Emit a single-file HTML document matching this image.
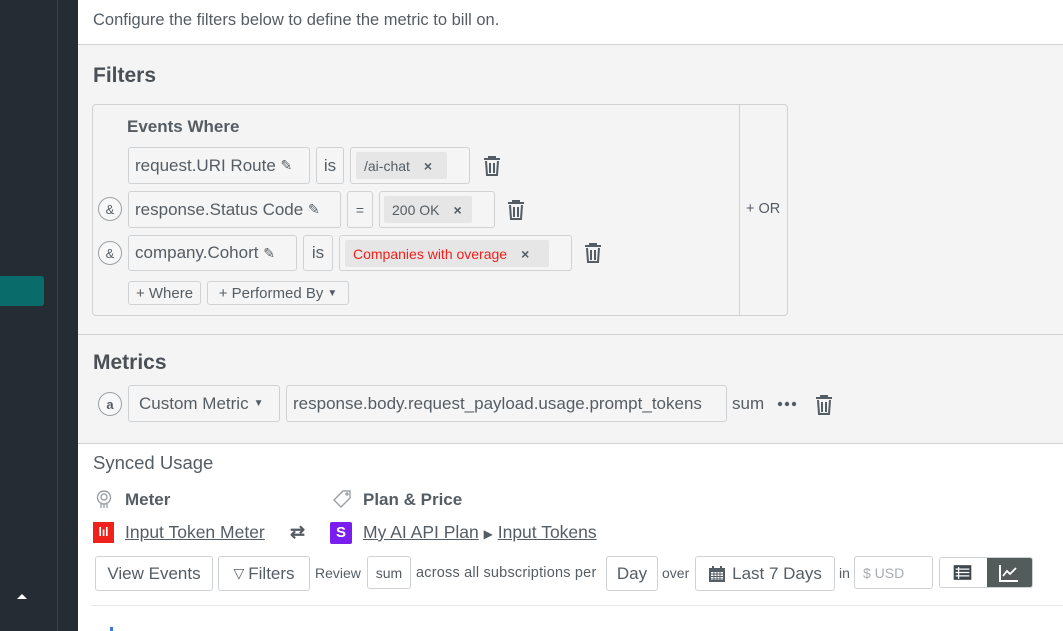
<!DOCTYPE html>
<html><head><meta charset="utf-8"><style>
*{box-sizing:border-box;margin:0;padding:0}
body{width:1063px;height:631px;overflow:hidden;position:relative;background:#fff;font-family:"Liberation Sans",sans-serif;color:#555d64}
.a{position:absolute;white-space:nowrap}
.b{position:absolute;border:1px solid #cfd2d4;border-radius:3px;background:#f5f5f5;white-space:nowrap;display:flex;align-items:center;justify-content:center;font-size:17px;color:#555d64}
.l{justify-content:flex-start;padding-left:6px}
.w{background:#fff}
.chip{position:absolute;background:#e6e6e6;border-radius:2px;display:flex;align-items:center;font-size:14px;padding-left:8px;white-space:nowrap}
.c{position:absolute;width:24px;height:24px;border:1px solid #9aa0a4;border-radius:50%;background:#f8f8f8;font-size:13px;display:flex;align-items:center;justify-content:center}
.t{position:absolute}
u{text-decoration:underline}
</style></head><body>
<div class="a" style="left:0;top:0;width:78px;height:631px;background:#252c33"></div>
<div class="a" style="left:57px;top:0;width:1px;height:631px;background:#3a424a"></div>
<div class="a" style="left:0;top:276px;width:44px;height:30px;background:#0a6b6b;border-radius:0 3px 3px 0"></div>
<div class="a" style="left:17px;top:594px;width:0;height:0;border-left:5px solid transparent;border-right:5px solid transparent;border-bottom:5px solid #fff"></div>

<div class="a" style="left:93px;top:11px;font-size:16.5px;color:#555d64">Configure the filters below to define the metric to bill on.</div>
<div class="a" style="left:78px;top:44px;width:985px;height:399px;background:#f4f4f4;border-top:1px solid #cfd2d4"></div>
<div class="a" style="left:78px;top:334px;width:985px;height:1px;background:#cfd2d4"></div>
<div class="a" style="left:78px;top:443px;width:985px;height:1px;background:#cfd2d4"></div>

<div class="a" style="left:93px;top:64px;font-size:21px;font-weight:bold;color:#4a5056">Filters</div>
<div class="a" style="left:92px;top:104px;width:696px;height:212px;border:1px solid #cfd2d4;border-radius:4px"></div>
<div class="a" style="left:739px;top:105px;width:1px;height:210px;background:#cfd2d4"></div>
<div class="a" style="left:746px;top:201px;font-size:14.5px">+ OR</div>
<div class="a" style="left:127px;top:117px;font-size:17px;font-weight:bold;color:#555d64">Events Where</div>

<div class="b l" style="left:128px;top:147px;width:182px;height:37px">request.URI Route&nbsp;<span style="font-size:14px">✎</span></div>
<div class="b" style="left:316px;top:147px;width:28px;height:37px">is</div>
<div class="b" style="left:350px;top:147px;width:120px;height:37px"></div>
<div class="chip" style="left:356px;top:152px;width:91px;height:27px">/ai-chat<span style="margin-left:14px;font-weight:bold">×</span></div>

<div class="c" style="left:98px;top:197px">&amp;</div>
<div class="b l" style="left:128px;top:191px;width:213px;height:37px">response.Status Code&nbsp;<span style="font-size:14px">✎</span></div>
<div class="b" style="left:347px;top:191px;width:26px;height:37px;font-size:14px">=</div>
<div class="b" style="left:379px;top:191px;width:116px;height:37px"></div>
<div class="chip" style="left:384px;top:196px;width:88px;height:27px">200 OK<span style="margin-left:14px;font-weight:bold">×</span></div>

<div class="c" style="left:98px;top:241px">&amp;</div>
<div class="b l" style="left:128px;top:235px;width:169px;height:36px">company.Cohort&nbsp;<span style="font-size:14px">✎</span></div>
<div class="b" style="left:303px;top:235px;width:30px;height:36px">is</div>
<div class="b" style="left:339px;top:235px;width:233px;height:36px"></div>
<div class="chip" style="left:345px;top:240px;width:204px;height:27px;color:#f0201a">Companies with overage<span style="margin-left:14px;font-weight:bold;color:#555d64">×</span></div>
<div class="b" style="left:128px;top:281px;width:73px;height:24px;font-size:15px">+ Where</div>
<div class="b" style="left:207px;top:281px;width:142px;height:24px;font-size:15px">+ Performed By <span style="font-size:10px;margin-left:4px">▼</span></div>

<svg class="t" style="left:482px;top:155px" width="20" height="22" viewBox="0 0 20 22"><g fill="none" stroke="#555d64" stroke-width="2"><path d="M2 4h16M7 4V2h6v2M4 6l1 14h10l1-14M8 8v10M12 8v10"/></g></svg>
<svg class="t" style="left:506px;top:199px" width="20" height="22" viewBox="0 0 20 22"><g fill="none" stroke="#555d64" stroke-width="2"><path d="M2 4h16M7 4V2h6v2M4 6l1 14h10l1-14M8 8v10M12 8v10"/></g></svg>
<svg class="t" style="left:583px;top:242px" width="20" height="22" viewBox="0 0 20 22"><g fill="none" stroke="#555d64" stroke-width="2"><path d="M2 4h16M7 4V2h6v2M4 6l1 14h10l1-14M8 8v10M12 8v10"/></g></svg>

<div class="a" style="left:93px;top:351px;font-size:21px;font-weight:bold;color:#4a5056">Metrics</div>
<div class="c" style="left:98px;top:392px;font-weight:bold">a</div>
<div class="b l" style="left:128px;top:385px;width:152px;height:37px;padding-left:10px">Custom Metric <span style="font-size:10px;margin-left:5px">▼</span></div>
<div class="b l" style="left:286px;top:385px;width:441px;height:37px">response.body.request_payload.usage.prompt_tokens</div>
<div class="a" style="left:732px;top:394px;font-size:17px">sum</div>
<svg class="t" style="left:777px;top:400px" width="20" height="8" viewBox="0 0 20 8"><g fill="#555d64"><circle cx="3" cy="4" r="2.2"/><circle cx="10" cy="4" r="2.2"/><circle cx="17" cy="4" r="2.2"/></g></svg>
<svg class="t" style="left:814px;top:394px" width="20" height="22" viewBox="0 0 20 22"><g fill="none" stroke="#555d64" stroke-width="2"><path d="M2 4h16M7 4V2h6v2M4 6l1 14h10l1-14M8 8v10M12 8v10"/></g></svg>

<div class="a" style="left:93px;top:452px;font-size:18.5px;color:#555d64">Synced Usage</div>
<svg class="t" style="left:96px;top:490px" width="16" height="19" viewBox="0 0 16 19"><g fill="none" stroke="#9aa0a4" stroke-width="1.4"><circle cx="8" cy="7.5" r="6.5"/><circle cx="8" cy="7" r="3"/><path d="M5 14v4M8 14v4M11 14v4"/></g></svg>
<div class="a" style="left:125px;top:490px;font-size:17px;font-weight:bold">Meter</div>
<svg class="t" style="left:332px;top:489px" width="20" height="20" viewBox="0 0 20 20"><g fill="none" stroke="#9aa0a4" stroke-width="1.4"><path d="M11 2h7v7l-9 9-7-7z"/><circle cx="15" cy="5" r="1"/></g></svg>
<div class="a" style="left:363px;top:490px;font-size:17px;font-weight:bold">Plan &amp; Price</div>
<div class="a" style="left:93px;top:522px;width:21px;height:21px;background:#f0201a;color:#fff;font-size:12px;font-weight:bold;text-align:center;line-height:21px">lıl</div>
<div class="a" style="left:125px;top:522px;font-size:17.5px"><u>Input Token Meter</u></div>
<div class="a" style="left:290px;top:522px;font-size:18px;font-weight:bold">⇄</div>
<div class="a" style="left:330px;top:522px;width:22px;height:22px;background:#7a1ef0;border-radius:2px;color:#fff;font-size:15px;font-weight:bold;text-align:center;line-height:22px">S</div>
<div class="a" style="left:363px;top:522px;font-size:17.5px"><u>My AI API Plan</u> <span style="font-size:12px">▶</span> <u>Input Tokens</u></div>

<div class="b w" style="left:95px;top:556px;width:118px;height:35px">View Events</div>
<div class="b w" style="left:218px;top:556px;width:92px;height:35px"><span style="font-size:14px;margin-right:4px">▽</span>Filters</div>
<div class="a" style="left:315px;top:565px;font-size:14px">Review</div>
<div class="b w" style="left:367px;top:556px;width:44px;height:33px;font-size:14px">sum</div>
<div class="a" style="left:416px;top:565px;font-size:14.5px;letter-spacing:0.2px">across all subscriptions per</div>
<div class="b w" style="left:606px;top:556px;width:52px;height:35px">Day</div>
<div class="a" style="left:662px;top:565px;font-size:14px">over</div>
<div class="b w" style="left:695px;top:556px;width:140px;height:35px"><svg width="18" height="18" viewBox="0 0 18 18" style="margin-right:6px"><rect x="1" y="3" width="16" height="14" fill="#555d64"/><rect x="3" y="7" width="12" height="8" fill="#fff"/><path d="M3 9h12M3 11.5h12M3 14h12M6 7v8M9 7v8M12 7v8" stroke="#555d64" stroke-width="1"/><rect x="4" y="1" width="2" height="4" fill="#555d64"/><rect x="12" y="1" width="2" height="4" fill="#555d64"/></svg>Last 7 Days</div>
<div class="a" style="left:839px;top:565px;font-size:14px">in</div>
<div class="b w" style="left:854px;top:556px;width:79px;height:33px;font-size:14px;color:#a8adb1;justify-content:flex-start;padding-left:8px">$ USD</div>
<div class="b w" style="left:939px;top:557px;width:94px;height:31px;overflow:hidden;justify-content:flex-start">
<svg width="48" height="31" viewBox="0 0 48 31"><g fill="#3f474e"><rect x="14" y="8" width="18" height="15"/></g><path d="M16 12h14M16 15.5h14M16 19h14M19 10v12" stroke="#fff" stroke-width="1.3"/></svg>
<div style="width:46px;height:31px;background:#545c5b;display:flex;align-items:center;justify-content:center"><svg width="20" height="18" viewBox="0 0 20 18"><path d="M1 1v16h18" fill="none" stroke="#fff" stroke-width="2"/><path d="M4 12l4-5 3 3 6-6" fill="none" stroke="#fff" stroke-width="1.8"/></svg></div>
</div>
<div class="a" style="left:92px;top:605px;width:971px;height:1px;background:#e6e7e8"></div>
<div class="a" style="left:110px;top:627px;width:3px;height:4px;background:#3a7bd5"></div>
</body></html>
